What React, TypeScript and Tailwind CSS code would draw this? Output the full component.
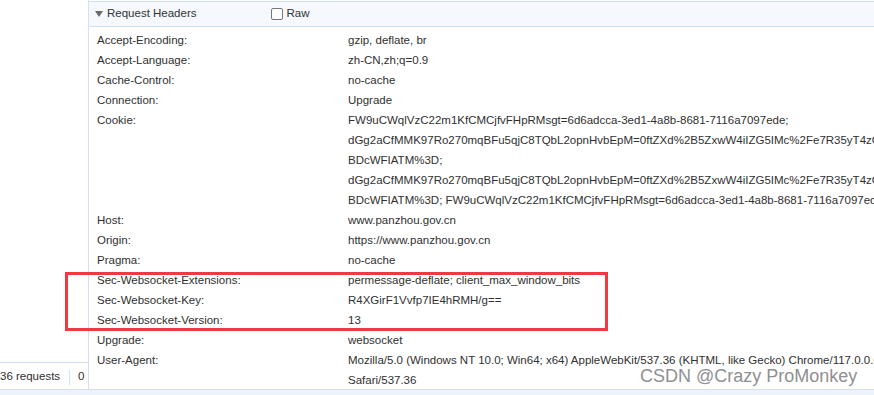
import React from "react";

const rows: { k: string; v: string[] }[] = [
  { k: "Accept-Encoding:", v: ["gzip, deflate, br"] },
  { k: "Accept-Language:", v: ["zh-CN,zh;q=0.9"] },
  { k: "Cache-Control:", v: ["no-cache"] },
  { k: "Connection:", v: ["Upgrade"] },
  {
    k: "Cookie:",
    v: [
      "FW9uCWqlVzC22m1KfCMCjfvFHpRMsgt=6d6adcca-3ed1-4a8b-8681-7116a7097ede;",
      "dGg2aCfMMK97Ro270mqBFu5qjC8TQbL2opnHvbEpM=0ftZXd%2B5ZxwW4iIZG5IMc%2Fe7R35yT4zQ%2BkL",
      "BDcWFIATM%3D;",
      "dGg2aCfMMK97Ro270mqBFu5qjC8TQbL2opnHvbEpM=0ftZXd%2B5ZxwW4iIZG5IMc%2Fe7R35yT4zQ%2BkL",
      "BDcWFIATM%3D; FW9uCWqlVzC22m1KfCMCjfvFHpRMsgt=6d6adcca-3ed1-4a8b-8681-7116a7097ede;",
    ],
  },
  { k: "Host:", v: ["www.panzhou.gov.cn"] },
  { k: "Origin:", v: ["https://www.panzhou.gov.cn"] },
  { k: "Pragma:", v: ["no-cache"] },
  { k: "Sec-Websocket-Extensions:", v: ["permessage-deflate; client_max_window_bits"] },
  { k: "Sec-Websocket-Key:", v: ["R4XGirF1Vvfp7IE4hRMH/g=="] },
  { k: "Sec-Websocket-Version:", v: ["13"] },
  { k: "Upgrade:", v: ["websocket"] },
  {
    k: "User-Agent:",
    v: [
      "Mozilla/5.0 (Windows NT 10.0; Win64; x64) AppleWebKit/537.36 (KHTML, like Gecko) Chrome/117.0.0.0",
      "Safari/537.36",
    ],
  },
];

export default function App() {
  return (
    <div
      className="relative flex h-[395px] w-[874px] flex-col overflow-hidden bg-white text-[11.5px] text-[#303030]"
      style={{ fontFamily: '"Liberation Sans", Arial, sans-serif' }}
    >
      <div className="flex min-h-0 flex-1">
        {/* left pane */}
        <div className="flex w-[89px] shrink-0 flex-col border-r border-[#d3e0f3]">
          <div className="flex-1" />
          <div className="flex h-[27px] items-center border-t border-[#d3e0f3] pt-[2px]">
            <span className="pr-[9px] whitespace-nowrap">36 requests</span>
            <span className="h-[15px] border-l border-[#d3e0f3]" />
            <span className="pl-[8px]">0</span>
          </div>
        </div>
        {/* right pane */}
        <div className="min-w-0 flex-1 overflow-hidden pt-px">
          <div className="flex h-[26px] items-center border-y border-[#cfdff6] bg-[#f5f8fd] pl-[6px]">
            <svg width="8" height="8" viewBox="0 0 8 8" className="mr-[4px]">
              <path d="M0 1 L8 1 L4 7 Z" fill="#6b6b6b" />
            </svg>
            <span className="text-[11.5px] text-[#333]">Request Headers</span>
            <span className="ml-[74px] inline-block h-[12px] w-[12px] rounded-[2px] border border-[#777] bg-white" />
            <span className="ml-[4px] text-[11.5px] text-[#333]">Raw</span>
          </div>
          <div className="pt-[3px]">
            {rows.map((r) => (
              <div key={r.k} className="flex">
                <div className="w-[259px] shrink-0 pl-[8px] leading-[20px] whitespace-nowrap">{r.k}</div>
                <div className="min-w-0 flex-1 overflow-hidden">
                  {r.v.map((line, i) => (
                    <div key={i} className="leading-[20px] whitespace-nowrap">
                      {line}
                    </div>
                  ))}
                </div>
              </div>
            ))}
          </div>
        </div>
      </div>
      <div className="h-[6px] shrink-0 border-t border-[#d3e0f3] bg-[#eef2f9]" />

      {/* annotation box */}
      <div className="pointer-events-none absolute left-[65px] top-[272px] h-[59px] w-[543px] border-[3px] border-[#ef3b3f]" />
      {/* watermark */}
      <div
        className="pointer-events-none absolute left-[640px] top-[363px] text-[18px] text-[#909090]"
        style={{ fontFamily: '"Liberation Sans", Arial, sans-serif' }}
      >
        CSDN @Crazy ProMonkey
      </div>
    </div>
  );
}
